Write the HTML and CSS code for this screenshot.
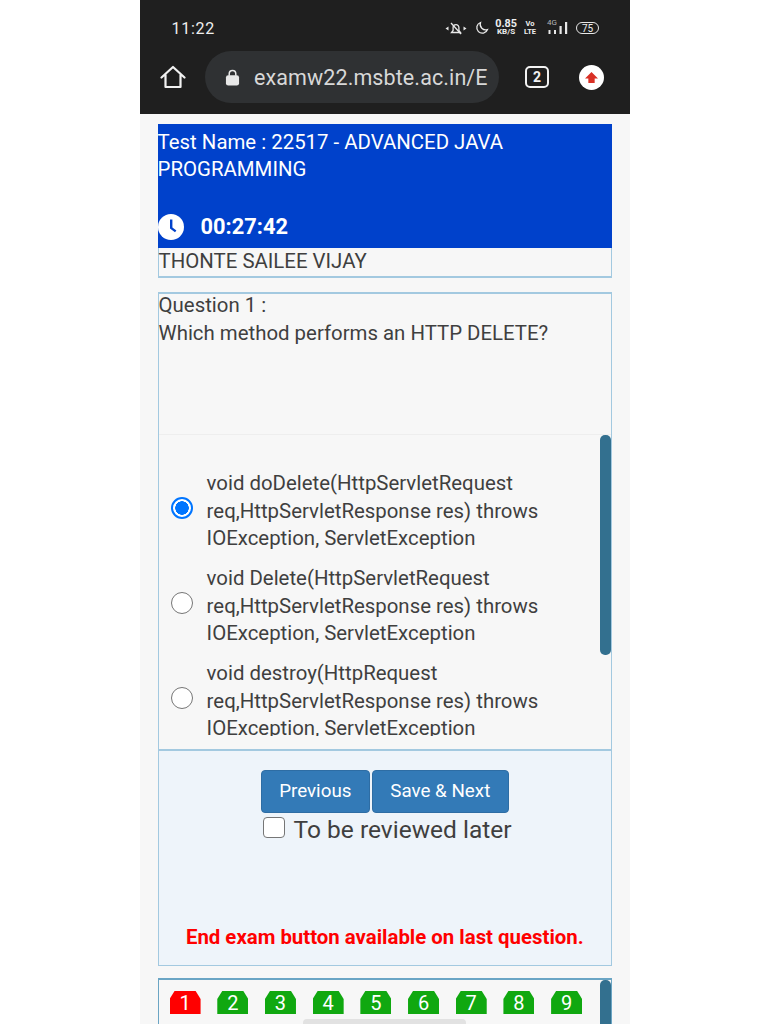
FILE: index.html
```html
<!DOCTYPE html>
<html lang="en">
<head>
<meta charset="utf-8">
<title>Exam</title>
<link rel="stylesheet" href="styles.css">
</head>
<body>
<div class="phone">
  <header class="chrome">
    <div class="status">
      <span class="time">11:22</span>
      <div class="status-icons">
        <svg class="ic-bell" viewBox="0 0 22 14" width="22" height="15"><g fill="none" stroke="#e8e8e8" stroke-width="1.3"><path d="M6.500 11h9l-1.600-2V6a2.900 2.900 0 0 0-5.800 0v3z"/><path d="M6 1.500l10 11"/></g><path d="M0.500 7l3-2v4zM21.500 7l-3-2v4z" fill="#e8e8e8"/></svg>
        <svg class="ic-moon" viewBox="0 0 14 14" width="14" height="14"><path d="M5.500 1.500a5.500 5.500 0 1 0 7 7A5.500 5.500 0 0 1 5.500 1.500z" fill="none" stroke="#e8e8e8" stroke-width="1.300"/></svg>
        <span class="speed"><b>0.85</b><b class="unit">KB/S</b></span>
        <span class="speed volte"><b>Vo</b><b>LTE</b></span>
        <span class="signal"><span class="net">4G</span>
          <svg viewBox="0 0 25 14" width="25" height="14"><path d="M5.500 9h2v4h-2zM11 9h2v4h-2zM16.500 5h2.200v8h-2.200zM22 1h2.200v12H22z" fill="#e8e8e8"/></svg>
        </span>
        <span class="battery"><span>75</span></span>
      </div>
    </div>
    <div class="toolbar">
      <svg class="home" viewBox="0 0 26 24" width="26" height="24"><path d="M1.500 12.500L13 2l11.500 10.500M5.500 10v12h15V10" fill="none" stroke="#f2f2f2" stroke-width="2.200" stroke-linejoin="round" stroke-linecap="round"/></svg>
      <div class="omnibox">
        <svg viewBox="0 0 16 18" width="15" height="17"><path d="M4.500 7V5a3.500 3.500 0 0 1 7 0v2" fill="none" stroke="#e8e8e8" stroke-width="1.600"/><rect x="1" y="6.500" width="14" height="11" rx="2.500" fill="#e8e8e8"/></svg>
        <span class="url">examw22.msbte.ac.in/E</span>
      </div>
      <span class="tabs">2</span>
      <span class="update"><svg viewBox="0 0 16 14" width="15" height="13"><path d="M8 1l7 7h-3.600v5H4.600V8H1z" fill="#d93025"/></svg></span>
    </div>
  </header>

  <main class="page">
    <section class="test-head">
      <p class="test-name">Test Name : 22517 - ADVANCED JAVA PROGRAMMING</p>
      <div class="timer">
        <svg viewBox="0 0 26 26" width="26" height="26"><circle cx="13" cy="13" r="13" fill="#fff"/><path d="M12 5.500h2.400v8l4 3-1.400 1.800-5-3.800z" fill="#0041cb"/></svg>
        <span>00:27:42</span>
      </div>
    </section>
    <div class="student">THONTE SAILEE VIJAY</div>

    <section class="question-box">
      <div class="question">Question 1 :<br>Which method performs an HTTP DELETE?</div>
      <div class="options">
        <div class="options-scroll">
          <label class="option"><input type="radio" name="a" checked><span>void doDelete(HttpServletRequest req,HttpServletResponse res) throws IOException, ServletException</span></label>
          <label class="option"><input type="radio" name="a"><span>void Delete(HttpServletRequest req,HttpServletResponse res) throws IOException, ServletException</span></label>
          <label class="option"><input type="radio" name="a"><span>void destroy(HttpRequest req,HttpServletResponse res) throws IOException, ServletException</span></label>
        </div>
        <div class="thumb"></div>
      </div>
    </section>

    <section class="actions">
      <div class="buttons">
        <button class="btn">Previous</button>
        <button class="btn btn-next">Save &amp; Next</button>
      </div>
      <label class="review"><input type="checkbox"><span>To be reviewed later</span></label>
      <p class="warning">End exam button available on last question.</p>
    </section>

    <section class="palette">
      <span class="q red">1</span><span class="q">2</span><span class="q">3</span><span class="q">4</span><span class="q">5</span><span class="q">6</span><span class="q">7</span><span class="q">8</span><span class="q">9</span>
      <div class="thumb thumb-p"></div>
      <div class="hscroll"></div>
    </section>
  </main>
</div>
</body>
</html>
```
FILE: styles.css
```css
* { box-sizing: border-box; }
html, body { margin: 0; height: 1024px; overflow: hidden; background: #fff; }
body { font-family: Roboto, "Liberation Sans", sans-serif; color: #3f3f3f; }
.phone { width: 490px; height: 1024px; margin-left: 140px; background: #f7f7f7; overflow: hidden; }

.chrome { height: 114px; background: #1f1f1f; color: #eee; }
.status { height: 51px; display: flex; align-items: center; justify-content: space-between; padding: 5px 31px 0 31.500px; }
.time { font-size: 16px; letter-spacing: 0.700px; }
.status-icons { display: flex; align-items: center; gap: 7px; }
.ic-moon { margin-left: 1px; margin-right: -1px; }
.speed { display: flex; flex-direction: column; align-items: center; font-size: 10.800px; line-height: 8.500px; }
.speed .unit { font-size: 8px; }
.volte b { font-size: 7.500px; }
.signal { display: flex; align-items: center; position: relative; }
.net { position: absolute; left: 4px; top: -3px; font-size: 8px; color: #b5b5b5; }
.battery { width: 23px; height: 12px; border: 1.300px solid #e8e8e8; border-radius: 6px; margin-left: 1px; font-size: 10px; display: flex; align-items: center; justify-content: center; }
.toolbar { height: 52px; display: flex; align-items: center; padding: 0 25px 0 20px; }
.home { flex: none; }
.omnibox { width: 294px; height: 52px; margin-left: 19px; border-radius: 26px; background: #2f3133; display: flex; align-items: center; padding-left: 20px; gap: 14px; }
.url { font-size: 21.500px; color: #d8d8d8; white-space: nowrap; letter-spacing: 0.100px; }
.tabs { width: 24px; height: 22px; margin-left: 26px; border: 2px solid #f2f2f2; border-radius: 5px; font-size: 14px; font-weight: 700; display: flex; align-items: center; justify-content: center; color: #f2f2f2; }
.update { width: 25px; height: 25px; margin-left: 30px; border-radius: 50%; background: #fff; display: flex; align-items: center; justify-content: center; }

.page { padding: 10px 18px 0 17.600px; }
.test-head { height: 124px; background: #0041cb; color: #fff; font-size: 20.400px; line-height: 27.300px; display: flex; flex-direction: column; justify-content: space-between; }
.test-name { margin: 5px 0 0; }
.timer { display: flex; align-items: center; gap: 17px; height: 27px; margin-bottom: 8px; font-size: 21.800px; font-weight: 700; }
.student { height: 30px; border: solid #a3c9e0; border-width: 0 1px 2px; font-size: 20.400px; line-height: 27px; }

.question-box { margin-top: 14px; border: 1px solid #a3c9e0; border-top-width: 2px; border-bottom: 0; padding-bottom: 13px; }
.question { height: 143px; margin-top: -2px; border-bottom: 1px solid #eeeeee; font-size: 20.400px; line-height: 27.500px; }
.options { position: relative; height: 301px; }
.options-scroll { height: 301px; overflow: hidden; padding-top: 29px; }
.option { display: flex; align-items: center; height: 95px; font-size: 20.400px; line-height: 27.500px; }
.option input { appearance: none; flex: none; width: 22px; height: 22px; margin: -8px 14px 0 12px; border: 1.500px solid #767676; border-radius: 50%; background: #fff; }
.option input:checked { border: 2px solid #0075ff; background: radial-gradient(circle, #0075ff 0 6.500px, #fff 7px); }
.option span { width: 345px; }
.thumb { position: absolute; right: 0; top: 0; width: 11px; height: 220px; border-radius: 5px; background: #33708f; }

.actions { height: 217px; background: #eef4fa; border: 1px solid #a3c9e0; border-top-width: 2px; padding-top: 19px; text-align: center; }
.buttons { display: flex; justify-content: center; gap: 2px; }
.btn { height: 43px; border: 1px solid #2e6da4; border-radius: 4px; background: #337ab7; color: #fff; font: 18.800px/1.400 Roboto, sans-serif; padding: 0; width: 109px; }
.btn-next { width: 137px; }
.review { display: flex; align-items: center; margin-top: 1px; padding-left: 104px; height: 30px; font-size: 24.500px; }
.review input { appearance: none; flex: none; width: 22px; height: 21px; margin: -4px 9px 0 0; border: 1.500px solid #767676; border-radius: 4px; background: #fff; }
.warning { margin: 81px 0 0; color: #f00; font-size: 20.400px; font-weight: 700; line-height: 24px; }

.palette { position: relative; margin-top: 12px; height: 60px; border: 1px solid #6ba5c4; border-top-width: 2px; padding: 11px 0 0 11px; display: flex; gap: 16.700px; }
.q { flex: none; width: 31px; height: 23px; background: #10a810; color: #fff; font-size: 20px; line-height: 24px; text-align: center; clip-path: polygon(16% 0, 84% 0, 100% 35%, 100% 100%, 0 100%, 0 35%); }
.q.red { background: #f00; }
.thumb-p { top: 0; height: 60px; }
.hscroll { position: absolute; left: 144px; top: 39px; width: 163px; height: 8px; border-radius: 4px; background: #e2e2e2; }
```
